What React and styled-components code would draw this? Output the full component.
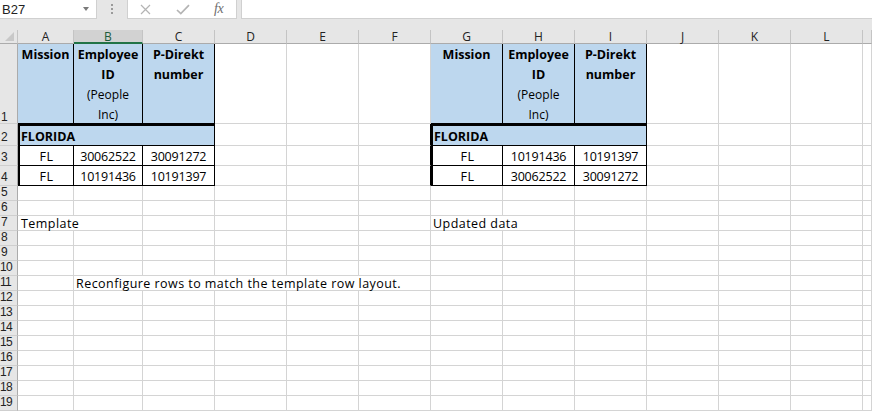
import React from 'react';
import styled, { createGlobalStyle } from 'styled-components';

const GRID = '#d4d4d4';
const BLUE = '#bdd7ee';
const BLACK = '#000';
const FONT = '"Open Sans", "Liberation Sans", sans-serif';

const Global = createGlobalStyle`
  html, body { margin: 0; padding: 0; background: #fff; overflow: hidden; }
  body { font-family: ${FONT}; }
  * { box-sizing: border-box; }
`;

const Window = styled.div`
  width: 872px;
  height: 411px;
  overflow: hidden;
  background: #e6e6e6;
  display: flex;
  flex-direction: column;
`;

const FormulaBar = styled.div`
  display: flex;
  height: 19px;
  flex: none;
  align-items: stretch;
`;

const NameBox = styled.div`
  width: 97px;
  background: #fff;
  border-bottom: 1px solid #d0d0d0;
  border-right: 1px solid #d0d0d0;
  display: flex;
  align-items: center;
  justify-content: space-between;
  padding: 0 7px 0 2px;
  font-family: "Liberation Sans", Arial, sans-serif;
  font-size: 13px;
  color: #222;
`;

const Caret = styled.span`
  width: 0;
  height: 0;
  margin-top: -1px;
  border-left: 3.5px solid transparent;
  border-right: 3.5px solid transparent;
  border-top: 4px solid #7a7a7a;
`;

const Grip = styled.div`
  width: 30px;
  display: flex;
  flex-direction: column;
  align-items: center;
  justify-content: center;
  gap: 2px;
  padding-bottom: 2px;
`;

const Dot = styled.span`
  width: 2px;
  height: 2px;
  background: #9a9a9a;
`;

const FuncBox = styled.div`
  width: 110px;
  background: #fff;
  border: 1px solid #d0d0d0;
  border-top: none;
  display: flex;
  align-items: center;
  padding-left: 12px;
`;

const FuncBtn = styled.span`
  width: ${(p) => p.$w || 36}px;
  display: flex;
  align-items: center;
  justify-content: flex-start;
`;

const Fx = styled.span`
  font-family: "Liberation Serif", "DejaVu Serif", serif;
  font-style: italic;
  font-size: 14px;
  line-height: 1;
  color: #6e6e6e;
  letter-spacing: -0.3px;
  margin-left: 2px;
  margin-top: -1px;
`;

const Input = styled.div`
  flex: 1;
  margin-left: 4px;
  background: #fff;
  border-left: 1px solid #d0d0d0;
  border-bottom: 1px solid #d0d0d0;
`;

const Sheet = styled.div`
  margin-top: 11px;
  flex: 1;
  display: grid;
  grid-template-columns: 18px 56px 69px repeat(10, 72px) 1fr;
  grid-template-rows: 14px 80px 22px 20px 20px repeat(15, 15px);
  background: #fff;
  font-size: 12.5px;
  color: #000;
`;

const Corner = styled.div`
  background: #e6e6e6;
  border-right: 1px solid #c4c4c4;
  border-bottom: 1px solid #ababab;
  position: relative;
  &::after {
    content: '';
    position: absolute;
    right: 3px;
    bottom: 2px;
    width: 0;
    height: 0;
    border-left: 9px solid transparent;
    border-bottom: 9px solid #c8c8c8;
  }
`;

const ColHead = styled.div`
  background: ${(p) => (p.$sel ? '#d2d2d2' : '#e6e6e6')};
  border-right: 1px solid #c4c4c4;
  border-bottom: ${(p) => (p.$sel ? '2px solid #217346' : '1px solid #ababab')};
  display: flex;
  align-items: center;
  justify-content: center;
  font-size: 12px;
  line-height: 12px;
  padding-top: ${(p) => (p.$sel ? '2px' : '1px')};
  color: ${(p) => (p.$sel ? '#1d5b3a' : '#222')};
`;

const RowHead = styled.div`
  background: #e6e6e6;
  border-right: 1px solid #ababab;
  border-bottom: 1px solid #cfcfcf;
  display: flex;
  flex-direction: column;
  justify-content: flex-end;
  align-items: flex-start;
  padding: 0 0 ${(p) => p.$pb}px ${(p) => (p.$two ? 0 : 1)}px;
  font-family: "Liberation Sans", Arial, sans-serif;
  font-size: 12px;
  letter-spacing: ${(p) => (p.$two ? '-0.7px' : '0')};
  line-height: 12px;
  color: #222;
  white-space: nowrap;
`;

const Cell = styled.div`
  grid-column: span ${(p) => p.$span || 1};
  background: ${(p) => p.$fill || '#fff'};
  border-right: ${(p) => p.$r || `1px solid ${GRID}`};
  border-bottom: ${(p) => p.$b || `1px solid ${GRID}`};
  border-top: ${(p) => p.$t || 'none'};
  border-left: ${(p) => p.$l || 'none'};
  display: flex;
  flex-direction: column;
  justify-content: ${(p) => (p.$top ? 'flex-start' : 'center')};
  align-items: ${(p) => (p.$center ? 'center' : 'flex-start')};
  padding-top: ${(p) => (p.$top ? 1 : 2)}px;
  padding-left: ${(p) => (p.$center ? '0' : `${p.$pad ?? 2}px`)};
  font-weight: ${(p) => (p.$bold ? 700 : 400)};
  letter-spacing: ${(p) => (p.$num ? '-0.2px' : p.$bold || p.$top ? '0' : '0.45px')};
  white-space: nowrap;
  line-height: ${(p) => (p.$top ? '20px' : '14px')};
`;

const Line = styled.span`
  font-weight: ${(p) => (p.$bold ? 700 : 400)};
  font-size: ${(p) => (p.$bold ? 12.5 : 12)}px;
`;

const COLS = 'ABCDEFGHIJKL'.split('');
const ROW_COUNT = 19;

const K = `1px solid ${BLACK}`;
const K2 = `2px solid ${BLACK}`;

const headerLines = (lines) => lines.map(([t, b]) => ({ t, b }));

function tableCells(c, rows) {
  const cells = {};
  const head = { $center: true, $top: true, $fill: BLUE, $r: K, $b: K };
  cells[`1-${c}`] = { ...head, lines: headerLines([['Mission', 1]]) };
  cells[`1-${c + 1}`] = {
    ...head,
    lines: headerLines([['Employee', 1], ['ID', 1], ['(People', 0], ['Inc)', 0]]),
  };
  cells[`1-${c + 2}`] = { ...head, lines: headerLines([['P-Direkt', 1], ['number', 1]]) };
  cells[`2-${c}`] = { text: 'FLORIDA', $bold: true, $span: 3, $fill: BLUE, $t: K2, $l: K2, $r: K, $b: K, $pad: 1 };
  rows.forEach((vals, i) => {
    const r = 3 + i;
    cells[`${r}-${c}`] = { text: vals[0], $center: true, $l: K2, $r: K, $b: K };
    cells[`${r}-${c + 1}`] = { text: vals[1], $center: true, $num: true, $r: K, $b: K };
    cells[`${r}-${c + 2}`] = { text: vals[2], $center: true, $num: true, $r: K, $b: K };
  });
  return cells;
}

const CELLS = {
  ...tableCells(0, [
    ['FL', '30062522', '30091272'],
    ['FL', '10191436', '10191397'],
  ]),
  ...tableCells(6, [
    ['FL', '10191436', '10191397'],
    ['FL', '30062522', '30091272'],
  ]),
  '2-5': { $r: K },
  '3-5': { $r: K },
  '4-5': { $r: K },
  '7-0': { text: 'Template', $span: 2, $pad: 3 },
  '7-6': { text: 'Updated data', $span: 2, $pad: 2 },
  '11-1': { text: 'Reconfigure rows to match the template row layout.', $span: 5, $pad: 2 },
};

function XIcon() {
  return (
    <svg width="11" height="11" viewBox="0 0 11 11">
      <path d="M1 1 L10 10 M10 1 L1 10" stroke="#b4b4b4" strokeWidth="1.2" fill="none" />
    </svg>
  );
}

function CheckIcon() {
  return (
    <svg width="14" height="11" viewBox="0 0 14 11">
      <path d="M1 6 L4.8 9.6 L13 1.2" stroke="#b4b4b4" strokeWidth="1.7" fill="none" />
    </svg>
  );
}

function renderRow(r) {
  const out = [
    <RowHead key={`rh${r}`} $two={r >= 10} $pb={r === 1 ? 0 : 2}>
      {r}
    </RowHead>,
  ];
  let col = 0;
  while (col < 13) {
    const spec = CELLS[`${r}-${col}`];
    if (spec) {
      const { text, lines, ...props } = spec;
      out.push(
        <Cell key={`${r}-${col}`} {...props}>
          {lines ? lines.map((l, i) => <Line key={i} $bold={l.b}>{l.t}</Line>) : text}
        </Cell>
      );
      col += spec.$span || 1;
    } else {
      out.push(<Cell key={`${r}-${col}`} />);
      col += 1;
    }
  }
  return out;
}

export default function App() {
  const rows = [];
  for (let r = 1; r <= ROW_COUNT; r += 1) rows.push(...renderRow(r));
  return (
    <Window>
      <Global />
      <FormulaBar>
        <NameBox>
          <span>B27</span>
          <Caret />
        </NameBox>
        <Grip>
          <Dot />
          <Dot />
          <Dot />
        </Grip>
        <FuncBox>
          <FuncBtn $w={36}><XIcon /></FuncBtn>
          <FuncBtn $w={36}><CheckIcon /></FuncBtn>
          <FuncBtn $w={24}><Fx>fx</Fx></FuncBtn>
        </FuncBox>
        <Input />
      </FormulaBar>
      <Sheet>
        <Corner />
        {COLS.map((c) => (
          <ColHead key={c} $sel={c === 'B'}>{c}</ColHead>
        ))}
        <ColHead />
        {rows}
      </Sheet>
    </Window>
  );
}
